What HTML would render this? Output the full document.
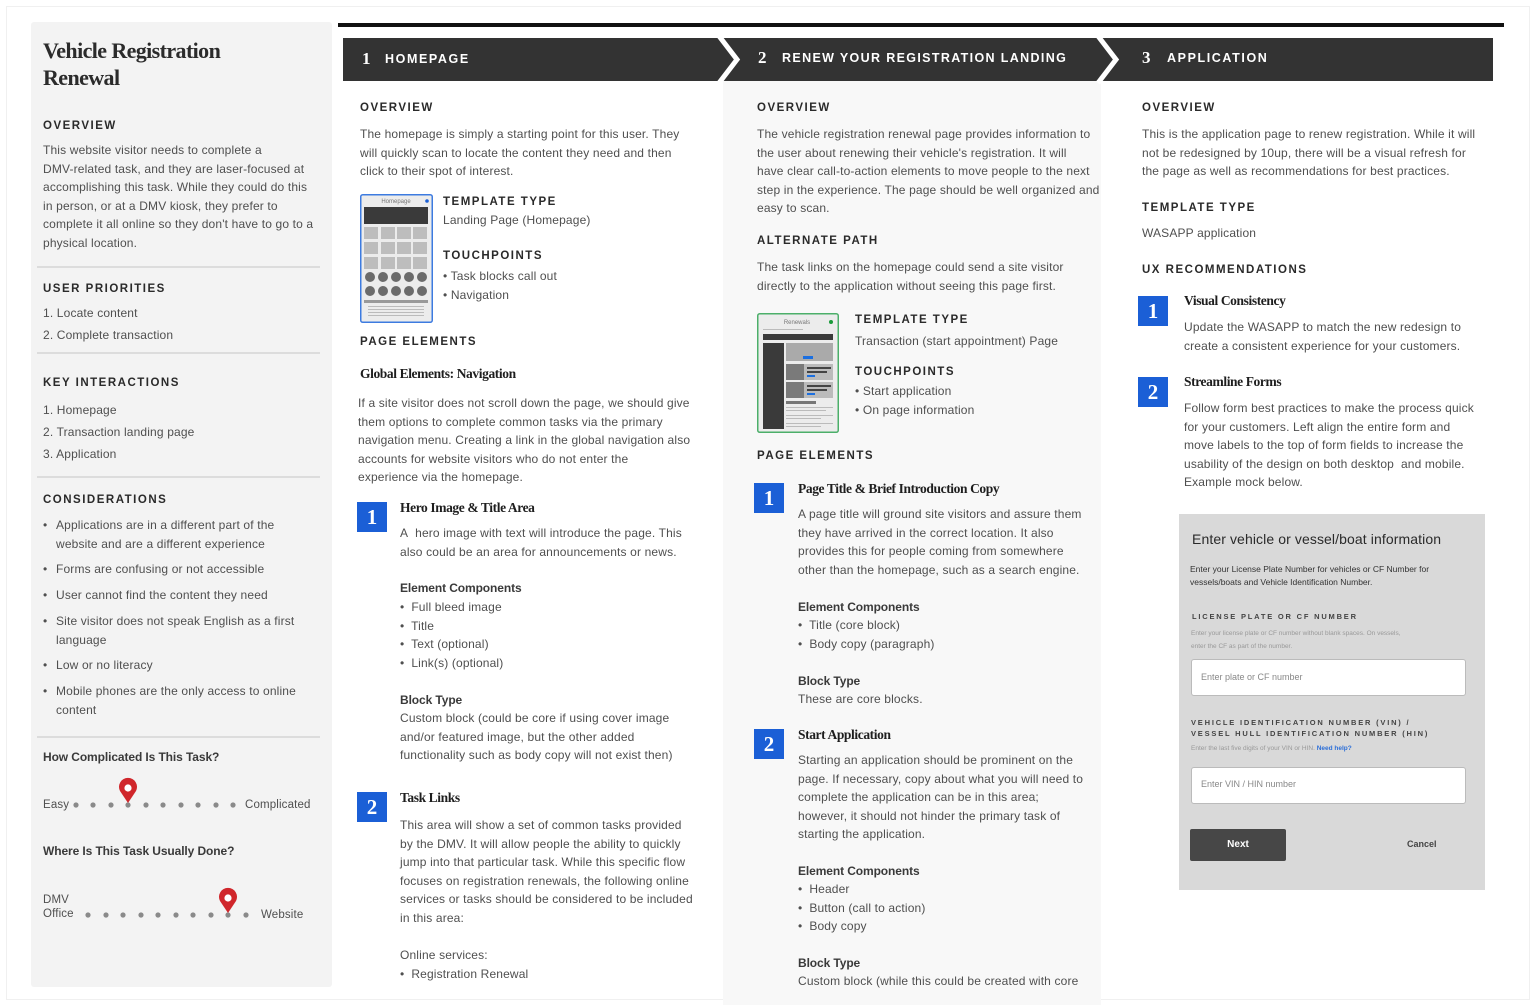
<!DOCTYPE html>
<html><head><meta charset="utf-8"><style>
*{margin:0;padding:0;box-sizing:border-box}
body{width:1536px;height:1005px;position:relative;overflow:hidden;background:#fff;font-family:"Liberation Sans",sans-serif;color:#4a4a4a}
.a{position:absolute;white-space:nowrap}
.p{position:absolute;white-space:nowrap;font-size:12px;letter-spacing:0.15px;line-height:18.5px;color:#4f4f4f}
.h{position:absolute;white-space:nowrap;font-size:11.5px;font-weight:bold;letter-spacing:1.5px;color:#2a2a2a;line-height:14px}
.s{position:absolute;white-space:nowrap;font-family:"Liberation Serif",serif;font-weight:bold;font-size:13.5px;letter-spacing:-0.4px;color:#1e1e1e;line-height:16px}
.b{position:absolute;white-space:nowrap;font-size:12px;font-weight:bold;color:#3a3a3a;letter-spacing:-0.1px;line-height:16px}
.n{position:absolute;width:30px;height:30px;background:#1b5fd6;color:#fff;font-family:"Liberation Serif",serif;font-weight:bold;font-size:21px;text-align:center;line-height:30px}
.hr{position:absolute;left:37px;width:283px;height:2px;background:#dcdcdc}
.li{position:absolute;white-space:nowrap;font-size:12px;letter-spacing:0.15px;line-height:18.5px;color:#4f4f4f;padding-left:13px}
.li:before{content:"•";position:absolute;left:0;top:0}
</style></head><body>
<div style="position:absolute;left:6px;top:6px;width:1524px;height:994px;border:1px solid #f0f0f0"></div>
<div style="position:absolute;left:31px;top:22px;width:301px;height:965px;background:#f3f3f3;border-radius:3px"></div>
<div class="a" style="left:43px;top:37px;font-family:'Liberation Serif',serif;font-weight:bold;font-size:22px;line-height:27px;color:#2b2b2b;letter-spacing:-0.6px">Vehicle Registration<br>Renewal</div>
<div class="h" style="left:43px;top:119px">OVERVIEW</div>
<div class="p" style="left:43px;top:141px">This website visitor needs to complete a<br>DMV-related task, and they are laser-focused at<br>accomplishing this task. While they could do this<br>in person, or at a DMV kiosk, they prefer to<br>complete it all online so they don't have to go to a<br>physical location.</div>
<div class="hr" style="top:266px"></div>
<div class="h" style="left:43px;top:282px">USER PRIORITIES</div>
<div class="p" style="left:43px;top:302px;line-height:22px">1. Locate content<br>2. Complete transaction</div>
<div class="hr" style="top:352px"></div>
<div class="h" style="left:43px;top:376px">KEY INTERACTIONS</div>
<div class="p" style="left:43px;top:399px;line-height:22px">1. Homepage<br>2. Transaction landing page<br>3. Application</div>
<div class="hr" style="top:476px"></div>
<div class="h" style="left:43px;top:493px">CONSIDERATIONS</div>
<div class="li" style="left:43px;top:516px">Applications are in a different part of the<br>website and are a different experience</div>
<div class="li" style="left:43px;top:560px">Forms are confusing or not accessible</div>
<div class="li" style="left:43px;top:586px">User cannot find the content they need</div>
<div class="li" style="left:43px;top:612px">Site visitor does not speak English as a first<br>language</div>
<div class="li" style="left:43px;top:656px">Low or no literacy</div>
<div class="li" style="left:43px;top:682px">Mobile phones are the only access to online<br>content</div>
<div class="hr" style="top:736px"></div>
<div class="b" style="left:43px;top:749px">How Complicated Is This Task?</div>
<div class="p" style="left:43px;top:796px;font-size:11.5px">Easy</div>
<div class="p" style="left:245px;top:796px;font-size:11.5px">Complicated</div>
<div class="b" style="left:43px;top:843px">Where Is This Task Usually Done?</div>
<div class="p" style="left:43px;top:893px;font-size:11.5px;line-height:14px">DMV<br>Office</div>
<div class="p" style="left:261px;top:906px;font-size:11.5px">Website</div>
<svg class="a" style="left:0;top:0" width="340" height="1000">
<g fill="#8a8a8a">
<circle cx="76" cy="805" r="2.6"/><circle cx="93" cy="805" r="2.6"/><circle cx="111" cy="805" r="2.6"/><circle cx="128" cy="805" r="2.6"/><circle cx="146" cy="805" r="2.6"/><circle cx="163" cy="805" r="2.6"/><circle cx="181" cy="805" r="2.6"/><circle cx="198" cy="805" r="2.6"/><circle cx="216" cy="805" r="2.6"/><circle cx="233" cy="805" r="2.6"/>
<circle cx="88" cy="915" r="2.6"/><circle cx="106" cy="915" r="2.6"/><circle cx="123" cy="915" r="2.6"/><circle cx="141" cy="915" r="2.6"/><circle cx="158" cy="915" r="2.6"/><circle cx="176" cy="915" r="2.6"/><circle cx="193" cy="915" r="2.6"/><circle cx="211" cy="915" r="2.6"/><circle cx="228" cy="915" r="2.6"/><circle cx="246" cy="915" r="2.6"/>
</g>
<path d="M128 803 L120 791 A9 9 0 1 1 136 791 Z" fill="#d0262b"/><circle cx="128" cy="788" r="3.6" fill="#fff"/>
<path d="M228 913 L220 901 A9 9 0 1 1 236 901 Z" fill="#d0262b"/><circle cx="228" cy="898" r="3.6" fill="#fff"/>
</svg>

<div style="position:absolute;left:338px;top:23px;width:1166px;height:4px;background:#111"></div>
<div style="position:absolute;left:723px;top:81px;width:378px;height:924px;background:#f8f8f8"></div>
<svg class="a" style="left:0;top:0" width="1536" height="90">
<rect x="343" y="38" width="1150" height="43" fill="#333"/>
<polyline points="719,36 737,59.5 719,83" fill="none" stroke="#fff" stroke-width="5"/>
<polyline points="1098,36 1116,59.5 1098,83" fill="none" stroke="#fff" stroke-width="5"/>
</svg>
<div class="a" style="left:362px;top:49px;font-family:'Liberation Serif',serif;font-weight:bold;font-size:17px;color:#fff">1</div>
<div class="a" style="left:385px;top:52px;font-weight:bold;font-size:12.5px;letter-spacing:1.6px;color:#fff">HOMEPAGE</div>
<div class="a" style="left:758px;top:48px;font-family:'Liberation Serif',serif;font-weight:bold;font-size:17px;color:#fff">2</div>
<div class="a" style="left:782px;top:51px;font-weight:bold;font-size:12.5px;letter-spacing:1.35px;color:#fff">RENEW YOUR REGISTRATION LANDING</div>
<div class="a" style="left:1142px;top:48px;font-family:'Liberation Serif',serif;font-weight:bold;font-size:17px;color:#fff">3</div>
<div class="a" style="left:1167px;top:51px;font-weight:bold;font-size:12.5px;letter-spacing:1.6px;color:#fff">APPLICATION</div>

<div class="h" style="left:360px;top:101px">OVERVIEW</div>
<div class="p" style="left:360px;top:125px">The homepage is simply a starting point for this user. They<br>will quickly scan to locate the content they need and then<br>click to their spot of interest.</div>
<svg class="a" style="left:360px;top:194px" width="73" height="129">
<rect x="0.75" y="0.75" width="71.5" height="127.5" rx="2" fill="#ececec" stroke="#3d7be0" stroke-width="1.5"/>
<text x="36" y="9" font-size="6" fill="#777" text-anchor="middle" font-family="Liberation Sans">Homepage</text>
<circle cx="67" cy="7" r="1.8" fill="#1b5fd6"/>
<rect x="4" y="13" width="64" height="17" fill="#3a3a3a"/>
<g fill="#bdbdbd"><rect x="4" y="33" width="14" height="12"/><rect x="21" y="33" width="14" height="12"/><rect x="37" y="33" width="14" height="12"/><rect x="53" y="33" width="14" height="12"/><rect x="4" y="48" width="14" height="12"/><rect x="21" y="48" width="14" height="12"/><rect x="37" y="48" width="14" height="12"/><rect x="53" y="48" width="14" height="12"/><rect x="4" y="63" width="14" height="12"/><rect x="21" y="63" width="14" height="12"/><rect x="37" y="63" width="14" height="12"/><rect x="53" y="63" width="14" height="12"/></g>
<g fill="#6b6b6b"><circle cx="10" cy="83" r="5"/><circle cx="23" cy="83" r="5"/><circle cx="36" cy="83" r="5"/><circle cx="49" cy="83" r="5"/><circle cx="62" cy="83" r="5"/><circle cx="10" cy="97" r="5"/><circle cx="23" cy="97" r="5"/><circle cx="36" cy="97" r="5"/><circle cx="49" cy="97" r="5"/><circle cx="62" cy="97" r="5"/></g>
<rect x="4" y="106" width="64" height="3" fill="#999"/>
<g fill="#bbb"><rect x="8" y="112" width="56" height="1"/><rect x="8" y="115" width="56" height="1"/><rect x="8" y="118" width="56" height="1"/><rect x="8" y="121" width="56" height="1"/></g>
</svg>
<div class="h" style="left:443px;top:195px">TEMPLATE TYPE</div>
<div class="p" style="left:443px;top:211px">Landing Page (Homepage)</div>
<div class="h" style="left:443px;top:249px">TOUCHPOINTS</div>
<div class="p" style="left:443px;top:267px">• Task blocks call out<br>• Navigation</div>
<div class="h" style="left:360px;top:335px">PAGE ELEMENTS</div>
<div class="s" style="left:360px;top:366px">Global Elements: Navigation</div>
<div class="p" style="left:358px;top:394px">If a site visitor does not scroll down the page, we should give<br>them options to complete common tasks via the primary<br>navigation menu. Creating a link in the global navigation also<br>accounts for website visitors who do not enter the<br>experience via the homepage.</div>
<div class="n" style="left:357px;top:502px">1</div>
<div class="s" style="left:400px;top:500px">Hero Image &amp; Title Area</div>
<div class="p" style="left:400px;top:524px">A&nbsp; hero image with text will introduce the page. This<br>also could be an area for announcements or news.</div>
<div class="b" style="left:400px;top:580px">Element Components</div>
<div class="p" style="left:400px;top:598px">•&nbsp; Full bleed image<br>•&nbsp; Title<br>•&nbsp; Text (optional)<br>•&nbsp; Link(s) (optional)</div>
<div class="b" style="left:400px;top:692px">Block Type</div>
<div class="p" style="left:400px;top:709px">Custom block (could be core if using cover image<br>and/or featured image, but the other added<br>functionality such as body copy will not exist then)</div>
<div class="n" style="left:357px;top:792px">2</div>
<div class="s" style="left:400px;top:790px">Task Links</div>
<div class="p" style="left:400px;top:816px">This area will show a set of common tasks provided<br>by the DMV. It will allow people the ability to quickly<br>jump into that particular task. While this specific flow<br>focuses on registration renewals, the following online<br>services or tasks should be considered to be included<br>in this area:</div>
<div class="p" style="left:400px;top:946px">Online services:<br>•&nbsp; Registration Renewal</div>

<div class="h" style="left:757px;top:101px">OVERVIEW</div>
<div class="p" style="left:757px;top:125px">The vehicle registration renewal page provides information to<br>the user about renewing their vehicle's registration. It will<br>have clear call-to-action elements to move people to the next<br>step in the experience. The page should be well organized and<br>easy to scan.</div>
<div class="h" style="left:757px;top:234px">ALTERNATE PATH</div>
<div class="p" style="left:757px;top:258px">The task links on the homepage could send a site visitor<br>directly to the application without seeing this page first.</div>
<svg class="a" style="left:757px;top:313px" width="82" height="120">
<rect x="0.75" y="0.75" width="80.5" height="118.5" rx="2" fill="#ececec" stroke="#4caf6a" stroke-width="1.5"/>
<text x="40" y="11" font-size="6" fill="#777" text-anchor="middle" font-family="Liberation Sans">Renewals</text>
<circle cx="74" cy="9" r="2" fill="#1a9a3a"/>
<rect x="6" y="16" width="40" height="1" fill="#bbb"/>
<rect x="6" y="21" width="70" height="6" fill="#3a3a3a"/>
<rect x="6" y="30" width="21" height="86" fill="#3a3a3a"/>
<rect x="29" y="30" width="47" height="18" fill="#aaa"/><rect x="46" y="43" width="10" height="3" fill="#1b6fe0"/>
<rect x="29" y="51" width="47" height="16" fill="#bbb"/><rect x="29" y="51" width="18" height="16" fill="#7a7a7a"/><rect x="50" y="54" width="24" height="2" fill="#444"/><rect x="50" y="58" width="20" height="2" fill="#444"/><rect x="50" y="62" width="8" height="2" fill="#1b6fe0"/>
<rect x="29" y="69" width="47" height="16" fill="#bbb"/><rect x="29" y="69" width="18" height="16" fill="#7a7a7a"/><rect x="50" y="72" width="24" height="2" fill="#444"/><rect x="50" y="76" width="20" height="2" fill="#444"/><rect x="50" y="80" width="8" height="2" fill="#1b6fe0"/>
<rect x="29" y="88" width="30" height="3" fill="#777"/>
<g fill="#bbb"><rect x="29" y="94" width="47" height="1"/><rect x="29" y="97" width="40" height="1"/><rect x="29" y="102" width="47" height="1"/><rect x="29" y="105" width="35" height="1"/><rect x="29" y="110" width="47" height="1"/><rect x="29" y="113" width="35" height="1"/></g>
</svg>
<div class="h" style="left:855px;top:313px">TEMPLATE TYPE</div>
<div class="p" style="left:855px;top:332px">Transaction (start appointment) Page</div>
<div class="h" style="left:855px;top:365px">TOUCHPOINTS</div>
<div class="p" style="left:855px;top:382px">• Start application<br>• On page information</div>
<div class="h" style="left:757px;top:449px">PAGE ELEMENTS</div>
<div class="n" style="left:754px;top:483px">1</div>
<div class="s" style="left:798px;top:481px">Page Title &amp; Brief Introduction Copy</div>
<div class="p" style="left:798px;top:505px">A page title will ground site visitors and assure them<br>they have arrived in the correct location. It also<br>provides this for people coming from somewhere<br>other than the homepage, such as a search engine.</div>
<div class="b" style="left:798px;top:599px">Element Components</div>
<div class="p" style="left:798px;top:616px">•&nbsp; Title (core block)<br>•&nbsp; Body copy (paragraph)</div>
<div class="b" style="left:798px;top:673px">Block Type</div>
<div class="p" style="left:798px;top:690px">These are core blocks.</div>
<div class="n" style="left:754px;top:729px">2</div>
<div class="s" style="left:798px;top:727px">Start Application</div>
<div class="p" style="left:798px;top:751px">Starting an application should be prominent on the<br>page. If necessary, copy about what you will need to<br>complete the application can be in this area;<br>however, it should not hinder the primary task of<br>starting the application.</div>
<div class="b" style="left:798px;top:863px">Element Components</div>
<div class="p" style="left:798px;top:880px">•&nbsp; Header<br>•&nbsp; Button (call to action)<br>•&nbsp; Body copy</div>
<div class="b" style="left:798px;top:955px">Block Type</div>
<div class="p" style="left:798px;top:972px">Custom block (while this could be created with core</div>

<div class="h" style="left:1142px;top:101px">OVERVIEW</div>
<div class="p" style="left:1142px;top:125px">This is the application page to renew registration. While it will<br>not be redesigned by 10up, there will be a visual refresh for<br>the page as well as recommendations for best practices.</div>
<div class="h" style="left:1142px;top:201px">TEMPLATE TYPE</div>
<div class="p" style="left:1142px;top:224px">WASAPP application</div>
<div class="h" style="left:1142px;top:263px">UX RECOMMENDATIONS</div>
<div class="n" style="left:1138px;top:296px">1</div>
<div class="s" style="left:1184px;top:293px">Visual Consistency</div>
<div class="p" style="left:1184px;top:318px">Update the WASAPP to match the new redesign to<br>create a consistent experience for your customers.</div>
<div class="n" style="left:1138px;top:377px">2</div>
<div class="s" style="left:1184px;top:374px">Streamline Forms</div>
<div class="p" style="left:1184px;top:399px">Follow form best practices to make the process quick<br>for your customers. Left align the entire form and<br>move labels to the top of form fields to increase the<br>usability of the design on both desktop&nbsp; and mobile.<br>Example mock below.</div>

<div style="position:absolute;left:1179px;top:514px;width:306px;height:376px;background:#d9d9d9"></div>
<div class="a" style="left:1192px;top:531px;font-size:14px;color:#2a2a2a;letter-spacing:0.1px">Enter vehicle or vessel/boat information</div>
<div class="a" style="left:1190px;top:563px;font-size:8.5px;line-height:13px;color:#333">Enter your License Plate Number for vehicles or CF Number for<br>vessels/boats and Vehicle Identification Number.</div>
<div class="a" style="left:1192px;top:612px;font-size:7.5px;font-weight:bold;letter-spacing:1.8px;color:#444">LICENSE PLATE OR CF NUMBER</div>
<div class="a" style="left:1191px;top:627px;font-size:6.5px;line-height:13px;color:#999">Enter your license plate or CF number without blank spaces. On vessels,<br>enter the CF as part of the number.</div>
<div style="position:absolute;left:1191px;top:659px;width:275px;height:37px;background:#fff;border:1px solid #bbb;border-radius:3px"></div>
<div class="a" style="left:1201px;top:672px;font-size:9px;color:#888">Enter plate or CF number</div>
<div class="a" style="left:1191px;top:717px;font-size:7.5px;font-weight:bold;letter-spacing:1.8px;line-height:11px;color:#444">VEHICLE IDENTIFICATION NUMBER (VIN) /<br>VESSEL HULL IDENTIFICATION NUMBER (HIN)</div>
<div class="a" style="left:1191px;top:745px;font-size:6.5px;color:#999">Enter the last five digits of your VIN or HIN. <b style="color:#2d6fd8">Need help?</b></div>
<div style="position:absolute;left:1191px;top:767px;width:275px;height:37px;background:#fff;border:1px solid #bbb;border-radius:3px"></div>
<div class="a" style="left:1201px;top:779px;font-size:9px;color:#888">Enter VIN / HIN number</div>
<div style="position:absolute;left:1190px;top:829px;width:96px;height:32px;background:#474747;border-radius:2px;color:#fff;font-size:10px;font-weight:bold;text-align:center;line-height:32px">Next</div>
<div class="a" style="left:1407px;top:839px;font-size:9px;font-weight:bold;color:#444">Cancel</div>
</body></html>
